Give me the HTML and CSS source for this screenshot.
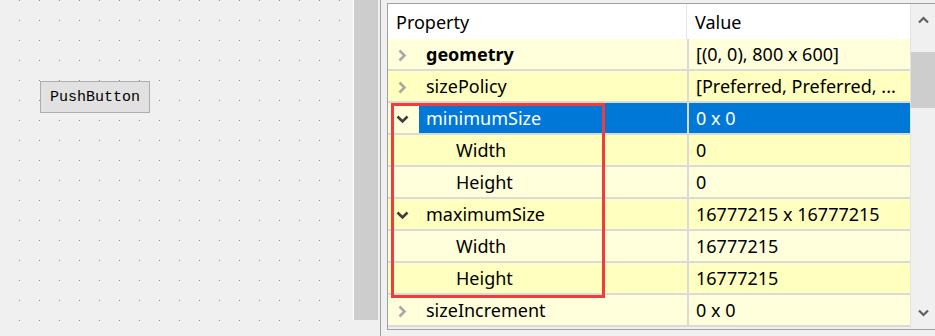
FILE: index.html
```html
<!DOCTYPE html>
<html lang="en">
<head>
  <meta charset="UTF-8">
  <title>Property Editor</title>
  <link rel="stylesheet" href="styles.css">
</head>
<body>
  <div class="form-canvas">
    <button class="push-button">PushButton</button>
  </div>

  <div class="splitter">
    <div class="form-scroll"></div>
    <div class="split-line"></div>
  </div>

  <div class="browser">
    <div class="tree">
      <div class="tree-header">
        <div class="head-name">Property</div>
        <div class="head-value">Value</div>
      </div>

      <div class="row light">
        <div class="branch"><svg class="arrow-closed" width="9" height="13"><polyline points="1.5,1.5 6.5,6.5 1.5,11.5"/></svg></div>
        <div class="name bold">geometry</div>
        <div class="value">[(0, 0), 800 x 600]</div>
      </div>
      <div class="row dark">
        <div class="branch"><svg class="arrow-closed" width="9" height="13"><polyline points="1.5,1.5 6.5,6.5 1.5,11.5"/></svg></div>
        <div class="name">sizePolicy</div>
        <div class="value">[Preferred, Preferred, ...</div>
      </div>
      <div class="row light selected">
        <div class="branch"><svg class="arrow-open" width="13" height="9"><polyline points="1.5,1.5 6.5,6.5 11.5,1.5"/></svg></div>
        <div class="name">minimumSize</div>
        <div class="value">0 x 0</div>
      </div>
      <div class="row dark">
        <div class="branch"></div>
        <div class="name sub">Width</div>
        <div class="value">0</div>
      </div>
      <div class="row light">
        <div class="branch"></div>
        <div class="name sub">Height</div>
        <div class="value">0</div>
      </div>
      <div class="row dark">
        <div class="branch"><svg class="arrow-open" width="13" height="9"><polyline points="1.5,1.5 6.5,6.5 11.5,1.5"/></svg></div>
        <div class="name">maximumSize</div>
        <div class="value">16777215 x 16777215</div>
      </div>
      <div class="row light">
        <div class="branch"></div>
        <div class="name sub">Width</div>
        <div class="value">16777215</div>
      </div>
      <div class="row dark">
        <div class="branch"></div>
        <div class="name sub">Height</div>
        <div class="value">16777215</div>
      </div>
      <div class="row light">
        <div class="branch"><svg class="arrow-closed" width="9" height="13"><polyline points="1.5,1.5 6.5,6.5 1.5,11.5"/></svg></div>
        <div class="name">sizeIncrement</div>
        <div class="value">0 x 0</div>
      </div>

      <div class="mark"></div>
    </div>

    <div class="vscroll">
      <div class="scroll-btn"><svg width="11" height="8"><polyline points="1,6.5 5.5,2 10,6.5"/></svg></div>
      <div class="thumb"></div>
      <div class="track"></div>
      <div class="scroll-btn"><svg width="11" height="8"><polyline points="1,1.5 5.5,6 10,1.5"/></svg></div>
    </div>
  </div>
</body>
</html>
```

FILE: styles.css
```css
body {
  margin: 0;
  width: 935px;
  height: 336px;
  overflow: hidden;
  display: flex;
  background: #f0f0f0;
  font-family: "Noto Sans", sans-serif;
  font-size: 18px;
  color: #000;
}

/* form canvas with designer grid dots */
.form-canvas {
  width: 353px;
  height: 336px;
  padding: 81px 0 0 40px;
  box-sizing: border-box;
  background-color: #f0f0f0;
  background-image: conic-gradient(at 1px 1px, transparent 75%, #8c8c8c 0);
  background-size: 20px 20px;
  background-position: 19px 0;
}

.push-button {
  display: block;
  width: 110px;
  height: 32px;
  padding: 0;
  border: 1px solid #adadad;
  background: #e1e1e1;
  font-family: "Liberation Mono", monospace;
  font-size: 15px;
  color: #000;
}

.splitter {
  width: 34px;
  display: flex;
}

.form-scroll {
  width: 24px;
  height: 320px;
  border-left: 1px solid #fff;
  background: #cdcdcd;
}

.split-line {
  width: 1px;
  margin-left: 2px;
  background: #a0a0a0;
}

/* property browser */
.browser {
  flex: 1;
  display: flex;
  margin-top: 3px;
  height: 327px;
  box-sizing: border-box;
  border: 1px solid #a0a0a0;
  border-right: none;
}

.tree {
  position: relative;
  width: 522px;
}

.tree-header {
  display: flex;
  height: 35px;
  line-height: 36px;
  background: #fff;
}

.head-name {
  width: 299px;
  padding-left: 8px;
  box-sizing: border-box;
  border-right: 1px solid #e5e5e5;
}

.head-value {
  padding-left: 8px;
}

.row {
  display: grid;
  grid-template-columns: 31px 270px 1fr;
  height: 32px;
  line-height: 30px;
  box-sizing: border-box;
  border-bottom: 2px solid #dadada;
  white-space: nowrap;
}

.row.light {
  background: #ffffdc;
}

.row.dark {
  background: #ffffbf;
}

.branch {
  display: flex;
  align-items: center;
  justify-content: center;
  padding: 2px 2px 0 0;
}

.branch svg {
  fill: none;
  stroke-width: 2.6;
}

.arrow-closed {
  stroke: #a8a8a8;
}

.arrow-open {
  stroke: #3c3c3c;
}

.name {
  padding-left: 7px;
  border-right: 2px solid #dadada;
}

.name.sub {
  padding-left: 37px;
}

.bold {
  font-weight: bold;
}

.value {
  padding-left: 7px;
  overflow: hidden;
}

.row.selected .name,
.row.selected .value {
  background: #0078d7;
  color: #fff;
}

/* red annotation frame drawn over the rows */
.mark {
  position: absolute;
  left: 3px;
  top: 99px;
  width: 214px;
  height: 195px;
  box-sizing: border-box;
  border: 3px solid #f23c3c;
}

.vscroll {
  width: 24px;
  display: flex;
  flex-direction: column;
  border-left: 1px solid #e3e3e3;
  background: #f0f0f0;
}

.scroll-btn {
  height: 32px;
  display: flex;
  align-items: center;
  justify-content: center;
}

.scroll-btn svg {
  fill: none;
  stroke: #606060;
  stroke-width: 2.2;
}

.thumb {
  height: 56px;
  margin-top: 16px;
  background: #cdcdcd;
}

.track {
  flex: 1;
}
```
